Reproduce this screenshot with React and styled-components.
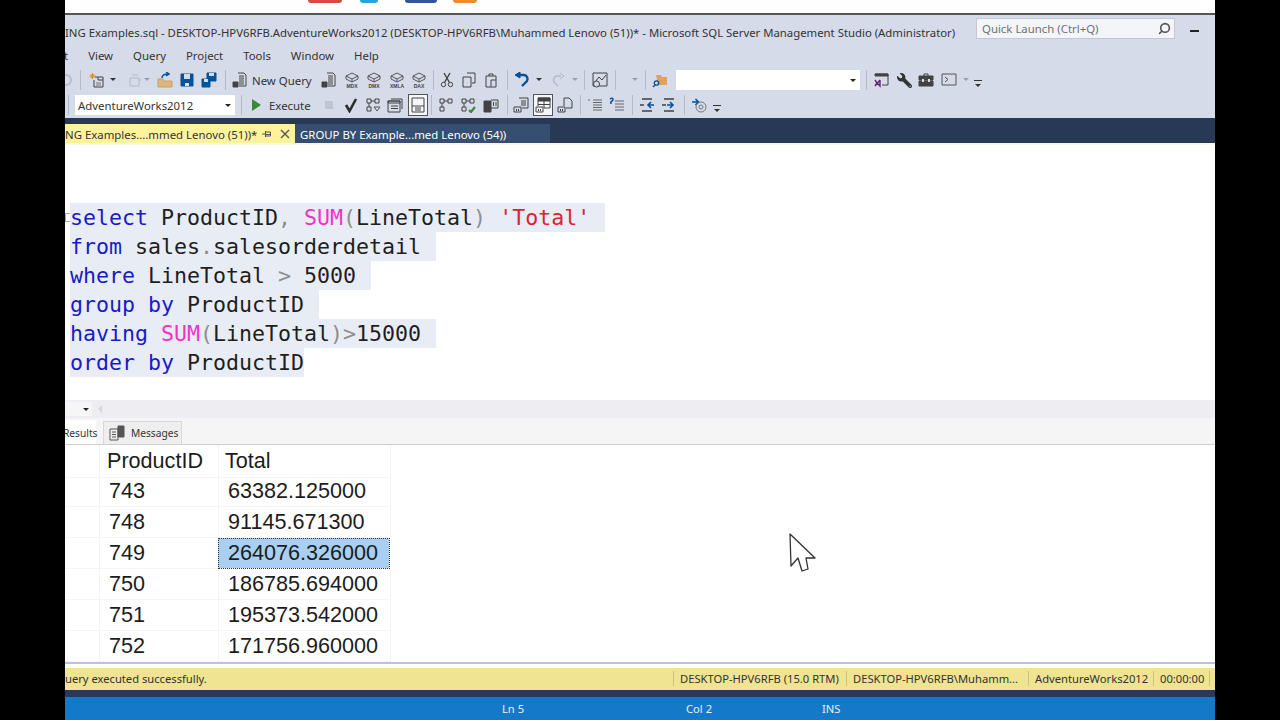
import React from "react";
import styled, { createGlobalStyle } from "styled-components";
import { FaWrench } from "react-icons/fa";
import { FiSearch } from "react-icons/fi";

const dark = "#424242";
const blue = "#00539c";

const Ico = ({ children, vb = "0 0 16 16" }) => (
	<svg width="16" height="16" viewBox={vb} fill="none" stroke={dark} strokeWidth="1">
		{children}
	</svg>
);

const NewProjectIcon = () => (
	<Ico>
		<path d="M6 5h8v10H5V8" />
		<path d="M9 5v3h5" />
		<path d="M3.5 1v6M.5 4h6M1.5 2l4 4M5.5 2l-4 4" stroke="#c98f2c" />
		<path d="M7 11h5M7 13h5" stroke="#777" />
	</Ico>
);
const FadedFileIcon = () => (
	<Ico>
		<path d="M3 6h9v8H3zM12 8h2M5 3h6" stroke="#b3b8c6" />
	</Ico>
);
const OpenIcon = () => (
	<Ico>
		<path d="M1 7h5l1 2h8v6H1z" fill="#dcb67a" stroke="#c9a262" />
		<path d="M5 6c0-3 2-4 6-4M9 0l3 2-3 2" stroke={blue} strokeWidth="1.5" />
	</Ico>
);
const SaveIcon = () => (
	<Ico>
		<path d="M2 2h12v12H2z" fill={blue} stroke={blue} />
		<path d="M5 2h6v5H5z" fill="#d6dbe9" stroke="none" />
		<path d="M6 11h4v3H6z" fill="#d6dbe9" stroke="none" />
	</Ico>
);
const SaveAllIcon = () => (
	<Ico>
		<path d="M6 1h9v8H6z" fill={blue} stroke={blue} />
		<path d="M8 1h5v3H8z" fill="#d6dbe9" stroke="none" />
		<path d="M1 7h8v8H1z" fill={blue} stroke={blue} />
		<path d="M3 7h4v3H3z" fill="#d6dbe9" stroke="none" />
	</Ico>
);
const QueryIcon = () => (
	<Ico>
		<path d="M6 1h6l2 2v11H7" />
		<path d="M7 4h5M7 6h5M7 8h5M7 10h5M7 12h5" />
		<path d="M1 10h5v5H1z" fill={dark} />
	</Ico>
);
const CubeIcon = ({ label }) => (
	<Ico>
		<path d="M8 1l6 3v3l-6 3-6-3V4zM2 4l6 3 6-3M8 7v3" stroke="#555" />
		<text x="8" y="15.5" fontSize="5" fontWeight="700" fontFamily="Liberation Sans" textAnchor="middle" fill="#444" stroke="none">
			{label}
		</text>
	</Ico>
);
const CutIcon = () => (
	<Ico>
		<circle cx="4.5" cy="12.5" r="2.2" />
		<circle cx="11.5" cy="12.5" r="2.2" />
		<path d="M5.5 10.5L11 1M10.5 10.5L5 1" strokeWidth="1.4" />
	</Ico>
);
const CopyIcon = () => (
	<Ico>
		<path d="M6 1h8v10h-3M2 5h8v10H2z" />
	</Ico>
);
const PasteIcon = () => (
	<Ico>
		<path d="M3 4h10v11H3zM6 4V2h4v2M8 8h5M8 8v7" />
	</Ico>
);
const UndoIcon = () => (
	<Ico>
		<path d="M3 3h7a4 4 0 0 1 3 6l-5 5" stroke={blue} strokeWidth="2.4" />
		<path d="M1 3l5-3v6z" fill={blue} stroke={blue} />
	</Ico>
);
const RedoIcon = () => (
	<Ico>
		<path d="M11 4H7a4 4 0 0 0-3 6l4 4" stroke="#b4b9c6" strokeWidth="1.5" />
		<path d="M10 1l4 3-4 3" stroke="#b4b9c6" />
	</Ico>
);
const ChartIcon = () => (
	<Ico>
		<path d="M1 1h14v13H1z" />
		<path d="M3 10l4-5 3 3 4-5" />
		<circle cx="4.5" cy="12" r="3" fill="#d6dbe9" />
	</Ico>
);
const FolderFindIcon = () => (
	<Ico>
		<path d="M4 3h5l1 2h5v8H6z" fill="#e0a458" stroke="none" />
		<circle cx="4.5" cy="11" r="2.2" stroke={blue} strokeWidth="1.3" />
		<path d="M3 13l-2 2" stroke={blue} strokeWidth="1.5" />
	</Ico>
);
const VsWindowIcon = () => (
	<Ico>
		<path d="M2 2h13v11H9" />
		<path d="M2 2h13v2H2z" fill={dark} />
		<path d="M2 8l2 3-2 3M7 8L2 14M7 8v6l-3-3" stroke="#68217a" strokeWidth="1.4" />
	</Ico>
);
const ToolboxIcon = () => (
	<Ico>
		<path d="M6 4V2h4v2" />
		<path d="M1 4h14v4H1zM1 9h14v5H1z" fill={dark} stroke={dark} />
		<path d="M4 7h2v3H4zM10 7h2v3h-2z" fill="#d6dbe9" stroke="none" />
	</Ico>
);
const TerminalIcon = () => (
	<Ico>
		<path d="M1 2h14v11H1z" stroke="#555" />
		<path d="M4 5l3 2.5L4 10" stroke="#555" />
	</Ico>
);
const PlayIcon = () => (
	<Ico>
		<path d="M4 2l9 6-9 6z" fill="#388a34" stroke="none" />
	</Ico>
);
const StopIcon = () => (
	<Ico>
		<path d="M4 4h8v8H4z" fill="#c0c5d2" stroke="none" />
	</Ico>
);
const CheckIcon = () => (
	<Ico>
		<path d="M3 8l3.5 6L13 2" stroke="#2d2d30" strokeWidth="2.6" />
	</Ico>
);
const TreeIcon = ({ check, arrow }) => (
	<Ico>
		<path d="M2 2h4v4H2zM10 2h4v4h-4zM6 4h4M4 6v4M2 10h4v4H2z" />
		{arrow && <path d="M9 10h6l-3 4z" stroke="#555" />}
		{check && <path d="M9 13l2 2 4-5" stroke="#388a34" strokeWidth="2.2" />}
	</Ico>
);
const WindowsIcon = () => (
	<Ico>
		<path d="M4 2h11v10" />
		<path d="M1 4h12v11H1z" />
		<path d="M1 4h12v2H1zM4 9h7M4 11.5h7" stroke={dark} />
	</Ico>
);
const FileResultIcon = () => (
	<Ico>
		<path d="M2 1h12v14H2z" />
		<path d="M2 9h12M5 11h6M5 13h6" />
	</Ico>
);
const ServerIcon = () => (
	<Ico>
		<path d="M1 4h7v11H1z" fill={dark} />
		<path d="M8 3h7v8H8" />
		<path d="M10.5 5v4M13 5v4" />
	</Ico>
);
const TextResultIcon = () => (
	<Ico>
		<path d="M6 1h9v10H9M8 4h5M8 6h5M8 8h5" />
		<path d="M1 10h7v5H1zM3.5 12v2M5.5 12v2" />
	</Ico>
);
const GridResultIcon = () => (
	<Ico>
		<path d="M3 1h12v10H9" />
		<path d="M3 1h12v3H3z" fill={dark} />
		<path d="M9 4v7M3 7.5h12M3 4v5" />
		<path d="M1 10h7v5H1zM3.5 12v2M5.5 12v2" />
	</Ico>
);
const FileResultSmallIcon = () => (
	<Ico>
		<path d="M9 11h6V4l-3-3H7v8" />
		<path d="M1 10h7v5H1zM3.5 12v2M5.5 12v2" />
	</Ico>
);
const IndentIcon = () => (
	<Ico>
		<path d="M1 3h2M6 3h9M6 5.5h9M6 8h9M6 10.5h9M6 13h9" stroke="#666" />
	</Ico>
);
const CommentIcon = () => (
	<Ico>
		<path d="M1 2c3-2 4 1 2 2s-1 2-1 3" stroke={blue} strokeWidth="1.5" />
		<path d="M6 4h9M6 7h9M6 10h9M6 13h9" stroke="#666" />
	</Ico>
);
const OutdentIcon = ({ flip }) => (
	<Ico>
		<path d="M3 2h10M3 14h10M1 8h4" stroke={dark} strokeWidth="1.4" />
		<path d={flip ? "M6 8h6M9 5l3 3-3 3" : "M15 8H9M12 5L9 8l3 3"} stroke={blue} strokeWidth="1.6" />
	</Ico>
);
const AtIcon = () => (
	<Ico>
		<path d="M1 5h6M4.5 2L7.5 5l-3 3" stroke={blue} strokeWidth="1.6" />
		<circle cx="10" cy="10" r="5" stroke="#777" />
		<circle cx="10" cy="10" r="2" stroke="#777" />
	</Ico>
);
const MessagesIcon = () => (
	<Ico>
		<path d="M1 4h8v11H1zM3 7h4M3 9.5h4M3 12h4" stroke="#555" />
		<path d="M9 1h6v11H9zM11 3h2M11 5h2" fill="#555" stroke="#555" />
	</Ico>
);
const PinIcon = () => (
	<svg width="10" height="10" viewBox="0 0 10 10" fill="none" stroke="#555">
		<path d="M0 5h3M3.5 2v6M3.5 3h5v4h-5M3.5 5.5h5" />
	</svg>
);
const CloseIcon = () => (
	<svg width="10" height="10" viewBox="0 0 10 10" fill="none" stroke="#555" strokeWidth="1.4">
		<path d="M1 1l8 8M9 1l-8 8" />
	</svg>
);

function App() {
	return (
		<>
			<GlobalStyle />
			<Page>
				<SideBar />
				<Screen>
					<TopStrip>
						<Blob $w={34} $c="#d84a3f" $l={243} />
						<Blob $w={18} $c="#2aa3dc" $l={18} />
						<Blob $w={32} $c="#2f5597" $l={27} />
						<Blob $w={24} $c="#ee8a32" $l={16} />
					</TopStrip>
					<Chrome>
						<TitleRow>
							<Title>ING Examples.sql - DESKTOP-HPV6RFB.AdventureWorks2012 (DESKTOP-HPV6RFB\Muhammed Lenovo (51))* - Microsoft SQL Server Management Studio (Administrator)</Title>
							<QuickLaunch>
								Quick Launch (Ctrl+Q)
								<FiSearch size={13} color="#555" strokeWidth={3} style={{ transform: "scaleX(-1)" }} />
							</QuickLaunch>
							<Minimize />
						</TitleRow>
						<MenuBar>
							<MenuItem>t</MenuItem>
							<MenuItem>View</MenuItem>
							<MenuItem>Query</MenuItem>
							<MenuItem>Project</MenuItem>
							<MenuItem>Tools</MenuItem>
							<MenuItem>Window</MenuItem>
							<MenuItem>Help</MenuItem>
						</MenuBar>
						<ToolBar>
							<RedoStub />
							<Sep $l={8} />
							<Tool $l={7}><NewProjectIcon /></Tool>
							<Caret $l={3} />
							<Tool $l={10} $w={16}><FadedFileIcon /></Tool>
							<Caret $l={0} $faded />
							<Tool $l={5}><OpenIcon /></Tool>
							<Tool $l={4}><SaveIcon /></Tool>
							<Tool $l={4}><SaveAllIcon /></Tool>
							<Sep $l={7} />
							<Tool $l={5}><QueryIcon /></Tool>
							<ToolLabel $l={3} $w={60}>New Query</ToolLabel>
							<Tool $l={8}><QueryIcon /></Tool>
							<Tool $l={5}><CubeIcon label="MDX" /></Tool>
							<Tool $l={4}><CubeIcon label="DMX" /></Tool>
							<Tool $l={5}><CubeIcon label="XMLA" /></Tool>
							<Tool $l={4}><CubeIcon label="DAX" /></Tool>
							<Sep $l={5} />
							<Tool $l={4}><CutIcon /></Tool>
							<Tool $l={4}><CopyIcon /></Tool>
							<Tool $l={4}><PasteIcon /></Tool>
							<Sep $l={7} />
							<Tool $l={5}><UndoIcon /></Tool>
							<Caret $l={4} />
							<Tool $l={6}><RedoIcon /></Tool>
							<Caret $l={4} $faded />
							<Sep $l={5} />
							<Tool $l={6}><ChartIcon /></Tool>
							<Sep $l={6} />
							<Caret $l={15} $faded />
							<Sep $l={6} />
							<Tool $l={5}><FolderFindIcon /></Tool>
							<ToolCombo $l={7} $w={184}><ComboCaret /></ToolCombo>
							<Sep $l={6} />
							<Tool $l={5}><VsWindowIcon /></Tool>
							<Tool $l={5}><FaWrench size={15} color="#333" style={{ transform: "scaleX(-1)" }} /></Tool>
							<Tool $l={4}><ToolboxIcon /></Tool>
							<Tool $l={5}><TerminalIcon /></Tool>
							<Caret $l={4} $faded />
							<Overflow $l={4} />
						</ToolBar>
						<ToolBar>
							<Sep $l={3} />
							<ToolCombo $l={6} $w={160}>
								AdventureWorks2012
								<ComboCaret />
							</ToolCombo>
							<Sep $l={6} />
							<Tool $l={5}><PlayIcon /></Tool>
							<ToolLabel $l={4} $w={42}>Execute</ToolLabel>
							<Tool $l={9}><StopIcon /></Tool>
							<Tool $l={4}><CheckIcon /></Tool>
							<Tool $l={4}><TreeIcon arrow /></Tool>
							<Tool $l={4}><WindowsIcon /></Tool>
							<Tool $l={4} $w={20} $boxed><FileResultIcon /></Tool>
							<Sep $l={3} />
							<Tool $l={5}><TreeIcon /></Tool>
							<Tool $l={4}><TreeIcon check /></Tool>
							<Tool $l={5}><ServerIcon /></Tool>
							<Sep $l={7} />
							<Tool $l={4}><TextResultIcon /></Tool>
							<Tool $l={3} $w={20} $boxed><GridResultIcon /></Tool>
							<Tool $l={3}><FileResultSmallIcon /></Tool>
							<Sep $l={6} />
							<Tool $l={5}><IndentIcon /></Tool>
							<Tool $l={4}><CommentIcon /></Tool>
							<Sep $l={6} />
							<Tool $l={5}><OutdentIcon /></Tool>
							<Tool $l={4}><OutdentIcon flip /></Tool>
							<Sep $l={6} />
							<Tool $l={5}><AtIcon /></Tool>
							<Overflow $l={5} />
						</ToolBar>
						<TabWell>
							<ActiveTab>
								<TabName>NG Examples....mmed Lenovo (51))*</TabName>
								<TabPin><PinIcon /></TabPin>
								<TabClose><CloseIcon /></TabClose>
							</ActiveTab>
							<OtherTab>GROUP BY Example...med Lenovo (54))</OtherTab>
						</TabWell>
						<TabLine />
					</Chrome>
					<Editor>
						<CodeLine>
							<Fold />
							<Sel $pad>
								<Kw>select</Kw> ProductID<Dim>,</Dim> <Fn>SUM</Fn><Dim>(</Dim>LineTotal<Dim>)</Dim> <Str>'Total'</Str>
							</Sel>
						</CodeLine>
						<CodeLine>
							<Sel $pad>
								<Kw>from</Kw> sales<Dim>.</Dim>salesorderdetail
							</Sel>
						</CodeLine>
						<CodeLine>
							<Sel $pad>
								<Kw>where</Kw> LineTotal <Dim>&gt;</Dim> 5000
							</Sel>
						</CodeLine>
						<CodeLine>
							<Sel $pad>
								<Kw>group by</Kw> ProductID
							</Sel>
						</CodeLine>
						<CodeLine>
							<Sel $pad>
								<Kw>having</Kw> <Fn>SUM</Fn><Dim>(</Dim>LineTotal<Dim>)&gt;</Dim>15000
							</Sel>
						</CodeLine>
						<CodeLine>
							<Sel>
								<Kw>order by</Kw> ProductID
							</Sel>
						</CodeLine>
					</Editor>
					<ScrollRow>
						<ZoomBox><ComboCaret /></ZoomBox>
						<ScrollArrow />
					</ScrollRow>
					<ResultTabs>
						<ResultsTab>Results</ResultsTab>
						<MessagesTab>
							<MessagesIcon />
							Messages
						</MessagesTab>
					</ResultTabs>
					<Grid>
						<GridRow>
							<RowHead />
							<IdHead>ProductID</IdHead>
							<TotalHead>Total</TotalHead>
						</GridRow>
						{rows.map(([id, total], i) => (
							<GridRow key={id}>
								<RowHead />
								<IdCell>{id}</IdCell>
								<TotalCell $selected={i === 2}>{total}</TotalCell>
							</GridRow>
						))}
						<Pointer width="28" height="40" viewBox="0 0 28 40">
							<path d="M1 1L26 25H17L19 36L13 38L9 25L2 33Z" fill="#fff" stroke="#333" strokeWidth="1.3" strokeLinejoin="round" />
						</Pointer>
					</Grid>
					<StatusYellow>
						<StatusMsg>uery executed successfully.</StatusMsg>
						<StatusCell $w={173}>DESKTOP-HPV6RFB (15.0 RTM)</StatusCell>
						<StatusCell $w={182}>DESKTOP-HPV6RFB\Muhamm...</StatusCell>
						<StatusCell $w={125}>AdventureWorks2012</StatusCell>
						<StatusCell $w={56}>00:00:00</StatusCell>
						<StatusEnd />
					</StatusYellow>
					<StatusGap />
					<StatusBlue>
						<BlueItem $w={184} $l={437}>Ln 5</BlueItem>
						<BlueItem $w={136}>Col 2</BlueItem>
						<BlueItem>INS</BlueItem>
					</StatusBlue>
				</Screen>
				<SideBar />
			</Page>
		</>
	);
}

const rows = [
	["743", "63382.125000"],
	["748", "91145.671300"],
	["749", "264076.326000"],
	["750", "186785.694000"],
	["751", "195373.542000"],
	["752", "171756.960000"],
];

const GlobalStyle = createGlobalStyle`
	html, body {
		margin: 0;
		background: #000;
		overflow: hidden;
	}
`;

const Page = styled.div`
	display: flex;
	width: 1280px;
	height: 720px;
	font-family: "Noto Sans", "Liberation Sans", sans-serif;
	color: #333;
`;

const SideBar = styled.div`
	width: 65px;
	flex: none;
	background: #000;
`;

const Screen = styled.div`
	width: 1150px;
	flex: none;
	display: flex;
	flex-direction: column;
	background: #fff;
	overflow: hidden;
`;

const TopStrip = styled.div`
	height: 13px;
	display: flex;
	align-items: flex-start;
	background: #fff;
`;

const Blob = styled.div`
	width: ${(p) => p.$w}px;
	height: 3px;
	margin-left: ${(p) => p.$l}px;
	background: ${(p) => p.$c};
	border-radius: 0 0 10px 10px;
`;

const Chrome = styled.div`
	display: flex;
	flex-direction: column;
	background: #d6dbe9;
	border-top: 2px solid #555;
`;

const TitleRow = styled.div`
	height: 29px;
	display: flex;
	align-items: flex-start;
`;

const Title = styled.div`
	width: 911px;
	flex: none;
	font-size: 11.35px;
	line-height: 16px;
	margin-top: 10px;
	white-space: nowrap;
	overflow: hidden;
	color: #333;
`;

const QuickLaunch = styled.div`
	width: 199px;
	height: 21px;
	box-sizing: border-box;
	flex: none;
	margin-top: 3px;
	padding: 0 3px 0 5px;
	display: flex;
	align-items: center;
	justify-content: space-between;
	background: #f4f5f9;
	border: 1px solid #c4c8d4;
	font-size: 11.4px;
	color: #717171;
`;

const Minimize = styled.div`
	width: 9px;
	height: 2px;
	margin: 15px 0 0 15px;
	background: #222;
`;

const MenuBar = styled.div`
	height: 22px;
	padding-bottom: 2px;
	display: flex;
	align-items: center;
	gap: 20px;
	font-size: 11.4px;
	margin-left: -1px;
`;

const MenuItem = styled.div`
	color: #333;
`;

const ToolBar = styled.div`
	height: 24px;
	margin-bottom: 1px;
	display: flex;
	align-items: center;
	font-size: 11.4px;
`;

const Tool = styled.div`
	width: ${(p) => p.$w || 18}px;
	height: ${(p) => (p.$boxed ? 22 : 18)}px;
	box-sizing: border-box;
	flex: none;
	margin-left: ${(p) => p.$l}px;
	display: flex;
	align-items: center;
	justify-content: center;
	background: ${(p) => (p.$boxed ? "#f5f6fa" : "transparent")};
	border: ${(p) => (p.$boxed ? "1px solid #555" : "none")};
`;

const ToolLabel = styled.div`
	width: ${(p) => p.$w}px;
	flex: none;
	margin-left: ${(p) => p.$l}px;
	white-space: nowrap;
	color: #333;
`;

const Sep = styled.div`
	width: 1px;
	height: 20px;
	flex: none;
	margin-left: ${(p) => p.$l}px;
	background: #b4b9c8;
`;

const Caret = styled.div`
	width: 8px;
	height: 4px;
	flex: none;
	margin-left: ${(p) => p.$l}px;
	position: relative;
	&::after {
		content: "";
		position: absolute;
		left: 1px;
		top: 0;
		border-left: 3px solid transparent;
		border-right: 3px solid transparent;
		border-top: 3px solid ${(p) => (p.$faded ? "#9a9fad" : "#333")};
	}
`;

const RedoStub = styled.div`
	width: 7px;
	height: 12px;
	flex: none;
	box-sizing: border-box;
	border: 2px solid #b7bcc9;
	border-left: none;
	border-radius: 0 6px 6px 0;
`;

const ToolCombo = styled.div`
	width: ${(p) => p.$w}px;
	height: 20px;
	box-sizing: border-box;
	flex: none;
	margin-left: ${(p) => p.$l}px;
	padding: 0 3px;
	display: flex;
	align-items: center;
	justify-content: space-between;
	background: #fff;
	color: #333;
`;

const ComboCaret = styled.div`
	width: 0;
	height: 0;
	margin-left: auto;
	margin-right: 1px;
	border-left: 3px solid transparent;
	border-right: 3px solid transparent;
	border-top: 3px solid #222;
`;

const Overflow = styled.div`
	width: 8px;
	height: 8px;
	flex: none;
	margin: 8px 0 0 ${(p) => p.$l}px;
	box-sizing: border-box;
	border-top: 1px solid #333;
	position: relative;
	&::after {
		content: "";
		position: absolute;
		left: 1px;
		top: 3px;
		border-left: 3px solid transparent;
		border-right: 3px solid transparent;
		border-top: 3px solid #333;
	}
`;

const TabWell = styled.div`
	height: 25px;
	display: flex;
	align-items: flex-end;
	background: #293955;
`;

const ActiveTab = styled.div`
	width: 230px;
	height: 19px;
	padding-top: 1px;
	box-sizing: border-box;
	display: flex;
	align-items: center;
	background: #fff29d;
	font-size: 11.4px;
	color: #333;
	white-space: nowrap;
`;

const TabName = styled.span`
	width: 197px;
	flex: none;
`;

const TabPin = styled.span`
	display: flex;
	flex: none;
`;

const TabClose = styled.span`
	margin-left: 8px;
	display: flex;
	flex: none;
`;

const OtherTab = styled.div`
	width: 255px;
	height: 19px;
	padding: 1px 0 0 5px;
	box-sizing: border-box;
	display: flex;
	align-items: center;
	background: #364e6f;
	font-size: 11.4px;
	color: #fff;
	white-space: nowrap;
`;

const TabLine = styled.div`
	height: 2px;
	background: #f6f9e4;
`;

const Editor = styled.div`
	height: 255px;
	box-sizing: border-box;
	padding-top: 58px;
	font-family: "DejaVu Sans Mono", "Liberation Mono", monospace;
	font-size: 21.6px;
	background: #fff;
	color: #1e1e1e;
`;

const CodeLine = styled.div`
	height: 29px;
	line-height: 29px;
	padding-left: 5px;
	white-space: pre;
	position: relative;
`;

const Fold = styled.div`
	position: absolute;
	left: 0;
	top: 10px;
	width: 5px;
	height: 9px;
	box-sizing: border-box;
	border: 1px solid #aaa;
	border-right: none;
`;

const Sel = styled.span`
	display: inline-block;
	background: #e8edf5;
	padding-right: ${(p) => (p.$pad ? 15 : 0)}px;
`;

const Kw = styled.span`
	color: #1a1ac8;
`;

const Fn = styled.span`
	color: #f032c8;
`;

const Str = styled.span`
	color: #d8242e;
`;

const Dim = styled.span`
	color: #8e8e8e;
`;

const ScrollRow = styled.div`
	height: 18px;
	display: flex;
	align-items: center;
	background: #eeeef2;
`;

const ZoomBox = styled.div`
	width: 27px;
	height: 14px;
	padding-right: 2px;
	box-sizing: border-box;
	display: flex;
	align-items: center;
	background: #f6f6f6;
`;

const ScrollArrow = styled.div`
	margin-left: 6px;
	border-top: 4px solid transparent;
	border-bottom: 4px solid transparent;
	border-right: 4px solid #d8d8dc;
`;

const ResultTabs = styled.div`
	height: 26px;
	display: flex;
	align-items: flex-end;
	background: #f5f5f5;
	border-bottom: 1px solid #cfcfcf;
	font-family: "Noto Sans", "Liberation Sans", sans-serif;
	font-size: 10.2px;
	color: #333;
`;

const ResultsTab = styled.div`
	width: 33px;
	height: 24px;
	line-height: 26px;
	margin-left: -3px;
	padding-left: 1px;
	background: #fff;
`;

const MessagesTab = styled.div`
	height: 23px;
	width: 79px;
	box-sizing: border-box;
	margin-left: 7px;
	padding-left: 5px;
	display: flex;
	align-items: center;
	gap: 6px;
	background: #eeeeee;
	border: 1px solid #d8d8d8;
	border-bottom: none;
`;

const Grid = styled.div`
	height: 219px;
	box-sizing: border-box;
	position: relative;
	background: #fff;
	border-bottom: 2px solid #bcc2ce;
	font-family: "Liberation Sans", Arial, sans-serif;
	font-size: 21.6px;
	color: #1c1c1c;
`;

const GridRow = styled.div`
	display: grid;
	grid-template-columns: 35px 119px 172px;
	height: 31px;
`;

const RowHead = styled.div`
	border-right: 1px solid #f4f4f4;
	border-bottom: 1px solid #f5f5f5;
`;

const HeadCell = styled.div`
	box-sizing: border-box;
	line-height: 30px;
	border-right: 1px solid #f4f4f4;
	border-bottom: 1px solid #f5f5f5;
`;

const IdHead = styled(HeadCell)`
	padding-left: 7px;
	line-height: 32px;
`;

const TotalHead = styled(HeadCell)`
	padding-left: 6px;
	line-height: 32px;
`;

const IdCell = styled(HeadCell)`
	padding-left: 9px;
`;

const TotalCell = styled(HeadCell)`
	padding-left: ${(p) => (p.$selected ? 10 : 9)}px;
	${(p) => p.$selected && "margin: 0 1px 0 -1px; background: #a9cff2; outline: 1px dotted #333; outline-offset: -1px;"}
`;

const Pointer = styled.svg`
	position: absolute;
	left: 724px;
	top: 88px;
`;

const StatusYellow = styled.div`
	height: 22px;
	margin-top: 4px;
	padding-bottom: 2px;
	box-sizing: border-box;
	display: flex;
	align-items: center;
	background: #f0e391;
	font-size: 11.2px;
	color: #333;
	white-space: nowrap;
`;

const StatusMsg = styled.div`
	width: 608px;
	flex: none;
`;

const StatusCell = styled.div`
	width: ${(p) => p.$w}px;
	height: 15px;
	line-height: 15px;
	box-sizing: border-box;
	flex: none;
	padding-left: 6px;
	overflow: hidden;
	border-left: 1px solid #cfc37c;
`;

const StatusEnd = styled.div`
	width: 1px;
	height: 15px;
	background: #cfc37c;
`;

const StatusGap = styled.div`
	height: 7px;
	background: #293955;
`;

const StatusBlue = styled.div`
	flex: 1;
	display: flex;
	align-items: center;
	background: #1579c9;
	font-size: 11.2px;
	color: #e8f1f9;
`;

const BlueItem = styled.div`
	width: ${(p) => (p.$w ? `${p.$w}px` : "auto")};
	margin-left: ${(p) => p.$l || 0}px;
	flex: none;
`;

export default App;
